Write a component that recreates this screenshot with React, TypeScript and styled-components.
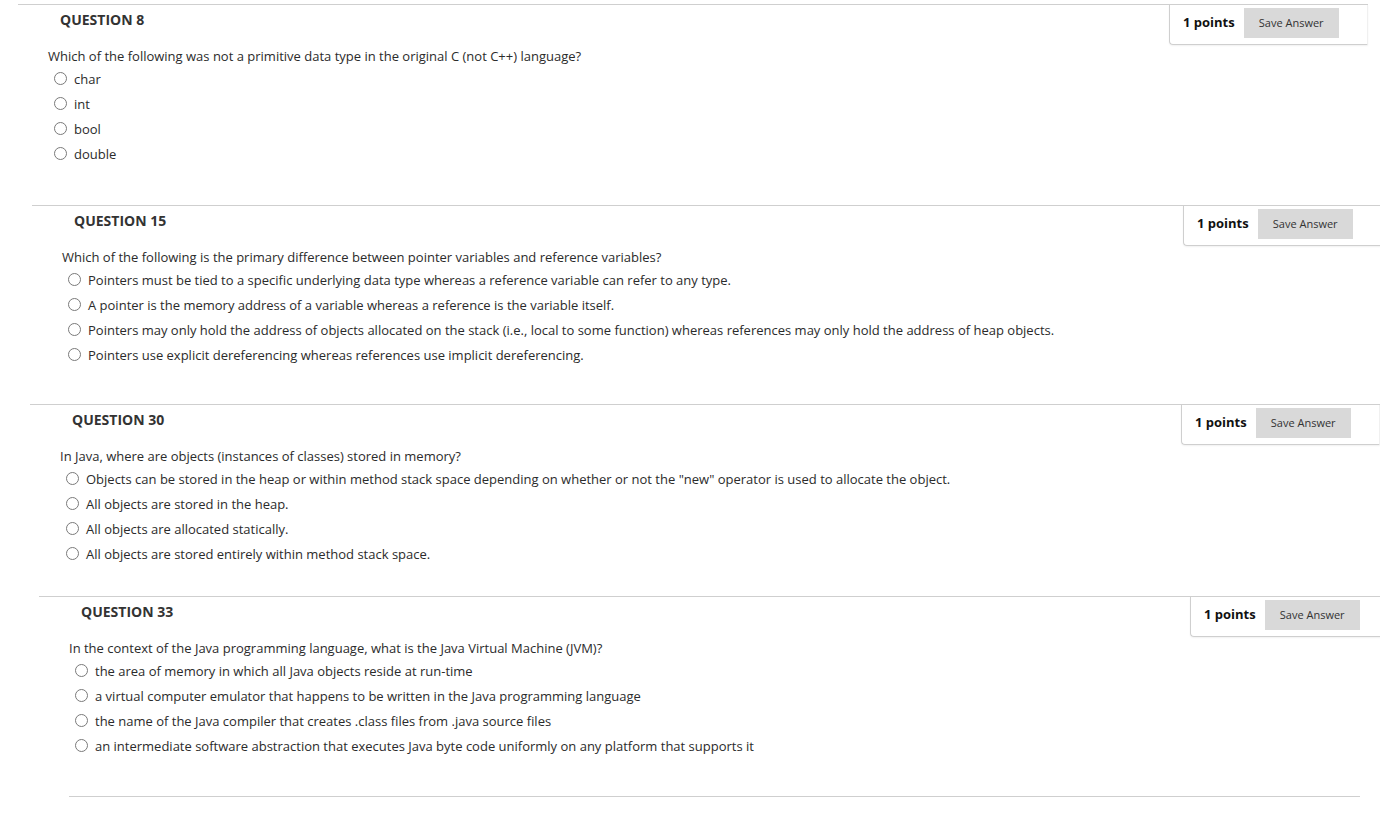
import React from "react"
import styled, { createGlobalStyle } from "styled-components"

const GlobalStyle = createGlobalStyle`
  html, body {
    margin: 0;
    padding: 0;
    background: #fff;
  }
  body {
    font-family: "Open Sans", "Liberation Sans", sans-serif;
    font-size: 13px;
    color: #333;
    overflow: hidden;
  }
`

type QuestionData = {
  number: number
  text: string
  options: string[]
  offset: number
  gap: number
}

const questions: QuestionData[] = [
  {
    number: 8,
    text: "Which of the following was not a primitive data type in the original C (not C++) language?",
    options: ["char", "int", "bool", "double"],
    offset: 18,
    gap: 4,
  },
  {
    number: 15,
    text: "Which of the following is the primary difference between pointer variables and reference variables?",
    options: [
      "Pointers must be tied to a specific underlying data type whereas a reference variable can refer to any type.",
      "A pointer is the memory address of a variable whereas a reference is the variable itself.",
      "Pointers may only hold the address of objects allocated on the stack (i.e., local to some function) whereas references may only hold the address of heap objects.",
      "Pointers use explicit dereferencing whereas references use implicit dereferencing.",
    ],
    offset: 32,
    gap: 39,
  },
  {
    number: 30,
    text: "In Java, where are objects (instances of classes) stored in memory?",
    options: [
      'Objects can be stored in the heap or within method stack space depending on whether or not the "new" operator is used to allocate the object.',
      "All objects are stored in the heap.",
      "All objects are allocated statically.",
      "All objects are stored entirely within method stack space.",
    ],
    offset: 30,
    gap: 37,
  },
  {
    number: 33,
    text: "In the context of the Java programming language, what is the Java Virtual Machine (JVM)?",
    options: [
      "the area of memory in which all Java objects reside at run-time",
      "a virtual computer emulator that happens to be written in the Java programming language",
      "the name of the Java compiler that creates .class files from .java source files",
      "an intermediate software abstraction that executes Java byte code uniformly on any platform that supports it",
    ],
    offset: 39,
    gap: 30,
  },
]

const Page = styled.div`
  width: 1380px;
  height: 814px;
  overflow: hidden;
`

const Block = styled.section<{ $offset: number; $gap: number }>`
  width: 1350px;
  margin-left: ${p => p.$offset}px;
  margin-top: ${p => p.$gap}px;
  border-top: 1px solid #cfcfcf;
`

const Header = styled.div`
  display: flex;
  align-items: flex-start;
`

const Title = styled.h3`
  margin: 0;
  padding: 5px 0 0 42px;
  font-size: 14px;
  line-height: 20px;
  font-weight: 700;
  color: #333;
`

const PointsBox = styled.div`
  margin-left: auto;
  width: 197px;
  height: 39px;
  box-sizing: content-box;
  display: flex;
  align-items: flex-start;
  border-left: 1px solid #cfcfcf;
  border-right: 1px solid #f0f0f0;
  border-bottom: 1px solid #cfcfcf;
  border-bottom-left-radius: 4px;
  box-shadow: 0 1px 2px rgba(0, 0, 0, 0.06);
`

const Points = styled.span`
  margin: 8px 0 0 13px;
  font-size: 13px;
  line-height: 18px;
  font-weight: 700;
  color: #111;
`

const SaveButton = styled.button`
  margin: 3px 0 0 9px;
  width: 95px;
  height: 30px;
  padding: 0 0 2px;
  border: none;
  background: #d9d9d9;
  font-family: "Open Sans", "Liberation Sans", sans-serif;
  font-size: 11px;
  color: #333;
`

const QuestionText = styled.p`
  margin: 1px 0 0 30px;
  font-size: 13px;
  line-height: 20px;
  color: #2b2b2b;
`

const Options = styled.ul`
  list-style: none;
  margin: 0;
  padding: 0 0 0 36px;
`

const Option = styled.li`
  display: flex;
  align-items: center;
  gap: 7px;
  height: 25px;
  font-size: 13px;
  color: #2b2b2b;
`

const Radio = styled.span`
  width: 13px;
  height: 13px;
  box-sizing: border-box;
  border: 1px solid #7a7a7a;
  border-radius: 50%;
  flex-shrink: 0;
`

const Footer = styled.hr`
  margin: 38px 0 0 69px;
  width: 1291px;
  border: none;
  border-top: 1px solid #cfcfcf;
`

const Question = ({ q }: { q: QuestionData }) => (
  <Block $offset={q.offset} $gap={q.gap}>
    <Header>
      <Title>QUESTION {q.number}</Title>
      <PointsBox>
        <Points>1 points</Points>
        <SaveButton>Save Answer</SaveButton>
      </PointsBox>
    </Header>
    <QuestionText>{q.text}</QuestionText>
    <Options>
      {q.options.map(opt => (
        <Option key={opt}>
          <Radio />
          <span>{opt}</span>
        </Option>
      ))}
    </Options>
  </Block>
)

export default function App() {
  return (
    <Page>
      <GlobalStyle />
      {questions.map(q => (
        <Question key={q.number} q={q} />
      ))}
      <Footer />
    </Page>
  )
}
